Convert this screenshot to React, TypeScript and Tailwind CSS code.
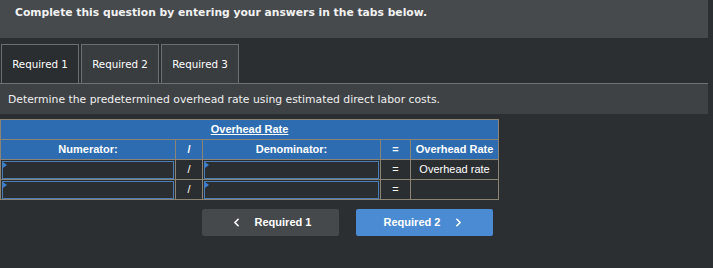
import { ChevronLeft, ChevronRight } from "lucide-react";

function InputCell() {
  return (
    <div className="relative h-[18px] mx-px border border-[#4a7db5] bg-[#2b2e30]">
      <span className="absolute left-0 top-0 w-0 h-0 border-t-[3px] border-b-[3px] border-l-[4px] border-t-transparent border-b-transparent border-l-[#3d7fd0]" />
    </div>
  );
}

export default function App() {
  const rows = [{ result: "Overhead rate" }, { result: "" }];

  return (
    <div className="w-[713px] h-[268px] overflow-hidden bg-[#2c2f31] font-['DejaVu_Sans',sans-serif] text-white">
      <div className="w-[708px] h-[38px] bg-[#464a4d] pl-[15px] pt-[5px] text-[10.75px] font-bold text-[#f2f2f2]">
        Complete this question by entering your answers in the tabs below.
      </div>

      <div className="flex gap-[2px] pl-px pt-[6px] w-[708px]">
        {["Required 1", "Required 2", "Required 3"].map((t, i) => (
          <div
            key={t}
            className={
              "w-[78px] h-[39px] flex items-center justify-center pt-[2px] text-[10.3px] border border-b-0 border-[#6a6e71] " +
              (i === 0 ? "bg-[#2b2e30]" : "bg-[#3a3d40]")
            }>
            {t}
          </div>
        ))}
      </div>

      <div className="w-[708px] h-[31px] border-t border-[#6e7275] bg-[#3e4245] pl-[8px] pt-[8px] text-[10.8px] text-[#f0f0f0]">
        Determine the predetermined overhead rate using estimated direct labor costs.
      </div>

      <table className="mt-[5px] w-[498px] border-collapse font-['Liberation_Sans',sans-serif] text-[11px] table-fixed">
        <colgroup>
          <col className="w-[175px]" />
          <col className="w-[27px]" />
          <col className="w-[178px]" />
          <col className="w-[30px]" />
          <col className="w-[88px]" />
        </colgroup>
        <tbody>
          <tr className="h-[20px] bg-[#2d6cb0]">
            <td colSpan={5} className="border border-[#8b8373] text-center font-bold underline">
              Overhead Rate
            </td>
          </tr>
          <tr className="h-[20px] bg-[#2d6cb0] font-bold">
            <td className="border border-[#8b8373] text-center">Numerator:</td>
            <td className="border border-[#8b8373] text-center">/</td>
            <td className="border border-[#8b8373] text-center">Denominator:</td>
            <td className="border border-[#8b8373] text-center">=</td>
            <td className="border border-[#8b8373] text-center">Overhead Rate</td>
          </tr>
          {rows.map((r, i) => (
            <tr key={i} className="h-[20px] bg-[#2b2e30]">
              <td className="border border-[#8b8373] p-0">
                <InputCell />
              </td>
              <td className="border border-[#8b8373] text-center">/</td>
              <td className="border border-[#8b8373] p-0">
                <InputCell />
              </td>
              <td className="border border-[#8b8373] text-center">=</td>
              <td className="border border-[#8b8373] text-center">{r.result}</td>
            </tr>
          ))}
        </tbody>
      </table>

      <div className="flex gap-[17px] pl-[202px] pt-[9px] font-['Liberation_Sans',sans-serif] text-[11px] font-bold">
        <button className="w-[137px] h-[27px] rounded-[2px] bg-[#45494c] flex items-center justify-center gap-[12px]">
          <ChevronLeft size={13} strokeWidth={3} />
          Required 1
        </button>
        <button className="w-[137px] h-[27px] rounded-[2px] bg-[#4a8bd4] flex items-center justify-center gap-[12px]">
          Required 2
          <ChevronRight size={13} strokeWidth={3} />
        </button>
      </div>
    </div>
  );
}
